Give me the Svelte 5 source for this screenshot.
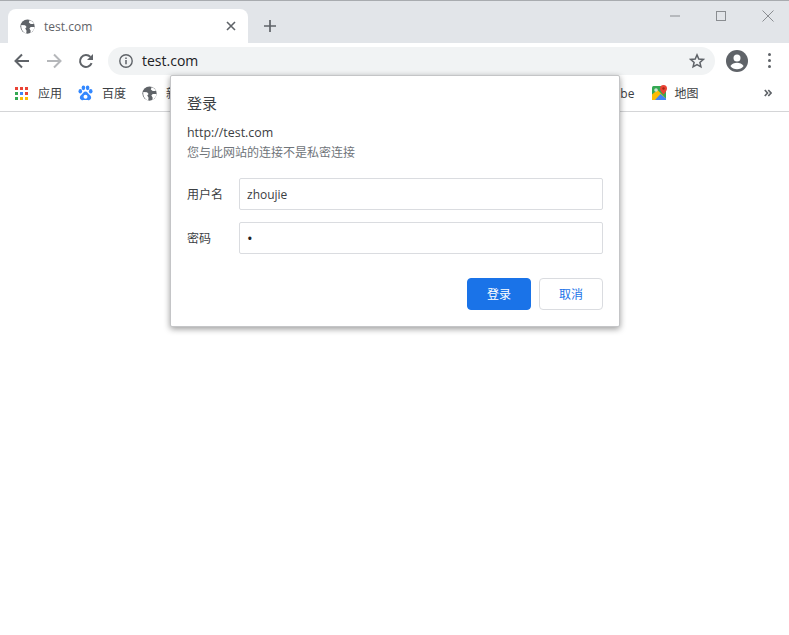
<script>
  const appsColors = ["#ea4335", "#ea4335", "#ea4335", "#34a853", "#4285f4", "#ea4335", "#34a853", "#fbbc05", "#fbbc05"];
  let username = "zhoujie";
  let password = "1";
</script>

{#snippet globe(size)}
  <svg class="icon" width={size} height={size} viewBox="0 0 16 16">
    <circle cx="8" cy="8" r="7.6" fill="#5f6368" />
    <path d="M1.400 6.400 5.400 6.600 7 8.400 5.600 10.200 7 12.600 6.600 15.400C3 14.400.8 10.400 1.400 6.400z" fill="#fff" />
    <path d="M10.200 1.400 9.400 3.800 11.400 5.400 14.800 5.200C14 3.400 12.200 2 10.200 1.400z" fill="#fff" />
    <path d="M15.400 8.600 11.400 8.400 10 10.200 11.400 12.600 11 14.800C13.400 13.800 15.200 11.400 15.400 8.600z" fill="#fff" />
  </svg>
{/snippet}

<div class="browser">
  <div class="tabstrip">
    <div class="tab">
      {@render globe(15)}
      <span class="tabtitle">test.com</span>
      <svg class="tabclose" width="10" height="10" viewBox="0 0 10 10"><path d="M1 1l8 8M9 1l-8 8" stroke="#5f6368" stroke-width="1.6" /></svg>
    </div>
    <svg class="newtab" width="12" height="12" viewBox="0 0 12 12"><path d="M6 0v12M0 6h12" stroke="#5f6368" stroke-width="1.7" /></svg>
    <div class="winctl">
      <svg width="10" height="10" viewBox="0 0 10 10"><path d="M0 5h10" stroke="#8a8d91" /></svg>
      <svg width="10" height="10" viewBox="0 0 10 10"><rect x=".5" y=".5" width="9" height="9" fill="none" stroke="#8a8d91" /></svg>
      <svg width="12" height="12" viewBox="0 0 12 12"><path d="M.5.5l11 11M11.500.5l-11 11" stroke="#8a8d91" /></svg>
    </div>
  </div>

  <div class="toolbar">
    <svg width="16" height="16" viewBox="0 0 16 16"><path d="M15 8H2M8 1.500 1.500 8 8 14.500" fill="none" stroke="#5f6368" stroke-width="2" /></svg>
    <svg width="16" height="16" viewBox="0 0 16 16"><path d="M1 8h13M8 1.500 14.500 8 8 14.500" fill="none" stroke="#b5b7ba" stroke-width="2" /></svg>
    <svg width="16" height="16" viewBox="0 0 16 16"><path d="M13.600 10.200A6 6 0 1 1 12.400 3.900" fill="none" stroke="#5f6368" stroke-width="2" /><path d="M15 1v6H9z" fill="#5f6368" /></svg>
    <div class="omnibox">
      <svg width="14" height="14" viewBox="0 0 14 14"><circle cx="7" cy="7" r="6.200" fill="none" stroke="#5f6368" stroke-width="1.400" /><path d="M7 6v4.200M7 3.400v1.500" stroke="#5f6368" stroke-width="1.500" /></svg>
      <span class="url">test.com</span>
      <svg class="star" width="16" height="16" viewBox="0 0 16 16"><path d="M8 1.900 9.800 6l4.500.4-3.400 3 1 4.400L8 11.500l-3.900 2.300 1-4.400-3.400-3L6.200 6z" fill="none" stroke="#5f6368" stroke-width="1.500" /></svg>
    </div>
    <svg class="avatar" width="22" height="22" viewBox="0 0 22 22"><circle cx="11" cy="11" r="11" fill="#5f6368" /><circle cx="11" cy="8" r="3.500" fill="#fff" /><path d="M4.400 16c1.600-2.600 4-3.300 6.600-3.300s5 .7 6.600 3.300c-1.600 2.200-3.900 3.300-6.600 3.300S6 18.200 4.400 16z" fill="#fff" /></svg>
    <div class="menu"><i></i><i></i><i></i></div>
  </div>

  <div class="bookmarks">
    <div class="bm apps">
      <div class="appsgrid">
        {#each appsColors as c}
          <i style="background: {c}"></i>
        {/each}
      </div>
      <span>应用</span>
    </div>
    <div class="bm baidu">
      <svg class="icon" width="15" height="16" viewBox="0 0 15 16" fill="#3388ff">
        <ellipse cx="2.300" cy="6.300" rx="1.800" ry="2.200" />
        <ellipse cx="5.400" cy="2.800" rx="1.800" ry="2.400" />
        <ellipse cx="9.600" cy="2.800" rx="1.800" ry="2.400" />
        <ellipse cx="12.700" cy="6.300" rx="1.800" ry="2.200" />
        <path d="M7.500 6.500c-2 0-2.600 2-4 3.200-1.300 1.100-2 2.300-1.500 3.800.6 1.700 2.600 1.900 3.500 1.600 1.300-.3 2.700-.3 4 0 .9.300 2.900.1 3.500-1.600.5-1.500-.2-2.700-1.500-3.800-1.400-1.200-2-3.200-4-3.200z" />
        <circle cx="7.500" cy="11.700" r="2" fill="#fff" />
      </svg>
      <span>百度</span>
    </div>
    <div class="bm hidden1">
      {@render globe(15)}
      <span>新闻</span>
    </div>
    <div class="bm youtube"><span>YouTube</span></div>
    <div class="bm maps">
      <svg class="icon" width="16" height="16" viewBox="0 0 16 16">
        <rect y="1" width="14" height="14" rx="1.500" fill="#34a853" />
        <path d="M0 15V9.500L5.500 5 14 13.500V15z" fill="#fbbc05" />
        <path d="M3 15 8.500 9 14 13.500V15H3z" fill="#4285f4" />
        <circle cx="4" cy="5" r="1.800" fill="#c9e6d2" />
        <path d="M11.500 0a3.500 3.500 0 0 0-3.500 3.500c0 2.500 3.500 6 3.500 6s3.500-3.500 3.500-6A3.500 3.500 0 0 0 11.500 0z" fill="#ea4335" />
        <circle cx="11.500" cy="3.500" r="1.200" fill="#a52714" />
      </svg>
      <span>地图</span>
    </div>
    <svg class="more" width="8" height="8" viewBox="0 0 8 8"><path d="M.8 1 3.500 4 .8 7M4.300 1 7 4 4.300 7" fill="none" stroke="#5f6368" stroke-width="1.700" /></svg>
  </div>

  <div class="page"></div>

  <div class="dialog">
    <h2>登录</h2>
    <p class="origin">http://test.com</p>
    <p class="note">您与此网站的连接不是私密连接</p>
    <div class="row">
      <label for="user">用户名</label>
      <input id="user" type="text" value={username} />
    </div>
    <div class="row">
      <label for="pass">密码</label>
      <input id="pass" class="secret" type="password" value={password} />
    </div>
    <div class="actions">
      <button class="primary">登录</button>
      <button class="cancel">取消</button>
    </div>
  </div>
</div>

<style>
  :global(body) {
    margin: 0;
    background: #fff;
  }
  .browser {
    position: relative;
    height: 635px;
    overflow: hidden;
    font-family: "Open Sans", "Noto Sans CJK SC", sans-serif;
    font-size: 12px;
    color: #3c4043;
  }
  .icon {
    flex: none;
  }
  .tabstrip {
    display: flex;
    align-items: flex-end;
    height: 42px;
    background: #e2e5e9;
    border-top: 1px solid #a8abaf;
  }
  .tab {
    display: flex;
    align-items: center;
    box-sizing: border-box;
    width: 240px;
    height: 34px;
    margin-left: 8px;
    padding: 0 12px;
    background: #fff;
    border-radius: 8px 8px 0 0;
  }
  .tabtitle {
    flex: 1;
    margin-left: 9px;
    font-size: 12px;
    color: #5f6368;
  }
  .newtab {
    margin: 0 0 11px 16px;
  }
  .winctl {
    display: flex;
    align-items: center;
    align-self: flex-start;
    gap: 36px;
    margin: 9px 15px 0 auto;
  }
  .toolbar {
    display: flex;
    align-items: center;
    height: 35px;
    padding-left: 14px;
    gap: 16px;
    background: #fff;
  }
  .omnibox {
    display: flex;
    align-items: center;
    box-sizing: border-box;
    width: 607px;
    height: 28px;
    margin-left: -2px;
    padding: 0 10px 0 11px;
    background: #f1f3f4;
    border-radius: 14px;
  }
  .url {
    flex: 1;
    margin-left: 9px;
    font-size: 14px;
    color: #202124;
  }
  .avatar {
    margin-left: -5px;
  }
  .menu {
    display: flex;
    flex-direction: column;
    gap: 3px;
    margin-left: 4px;
  }
  .menu i {
    width: 3px;
    height: 3px;
    border-radius: 50%;
    background: #5f6368;
  }
  .bookmarks {
    display: flex;
    align-items: center;
    box-sizing: border-box;
    height: 34px;
    padding: 0 0 3px 15px;
    background: #fff;
    border-bottom: 1px solid #d4d5d7;
  }
  .bm {
    display: flex;
    align-items: center;
    flex: none;
    gap: 9px;
    color: #3c4043;
  }
  .appsgrid {
    display: grid;
    grid-template-columns: repeat(3, 3px);
    grid-auto-rows: 3px;
    gap: 2px;
  }
  .apps {
    gap: 10px;
  }
  .baidu {
    margin-left: 16px;
  }
  .hidden1 {
    margin-left: 16px;
  }
  .youtube {
    margin-left: 395px;
  }
  .maps {
    gap: 6px;
    margin-left: 18px;
  }
  .more {
    margin-left: auto;
    margin-right: 17px;
  }
  .page {
    height: 523px;
  }
  .dialog {
    position: absolute;
    left: 170px;
    top: 75px;
    box-sizing: border-box;
    width: 450px;
    height: 252px;
    padding: 17px 16px 16px;
    background: #fff;
    border: 1px solid #c4c5c7;
    border-radius: 2px;
    box-shadow: 0 2px 6px rgba(0, 0, 0, 0.4);
  }
  h2 {
    margin: 0;
    font-size: 15px;
    font-weight: 400;
    line-height: 21px;
    color: #3c4043;
  }
  .origin {
    margin: 9px 0 0;
    font-size: 12.4px;
    line-height: 20px;
    color: #3c4043;
  }
  .note {
    margin: 0 0 15px;
    font-size: 12px;
    line-height: 20px;
    color: #70757a;
  }
  .row {
    display: flex;
    align-items: center;
    margin-bottom: 12px;
    height: 32px;
  }
  label {
    width: 52px;
    font-size: 12px;
    color: #3c4043;
  }
  input {
    box-sizing: border-box;
    width: 364px;
    height: 32px;
    padding: 0 7px;
    border: 1px solid #dadce0;
    border-radius: 2px;
    outline: none;
    font: inherit;
    color: #3c4043;
  }
  .secret {
    font-size: 15px;
    color: #202124;
  }
  .actions {
    display: flex;
    justify-content: flex-end;
    gap: 8px;
    margin-top: 24px;
  }
  button {
    box-sizing: border-box;
    height: 32px;
    width: 64px;
    padding: 0;
    border-radius: 4px;
    font: inherit;
  }
  .primary {
    background: #1a73e8;
    border: 1px solid #1a73e8;
    color: #fff;
  }
  .cancel {
    background: #fff;
    border: 1px solid #dadce0;
    color: #1a73e8;
  }
</style>
